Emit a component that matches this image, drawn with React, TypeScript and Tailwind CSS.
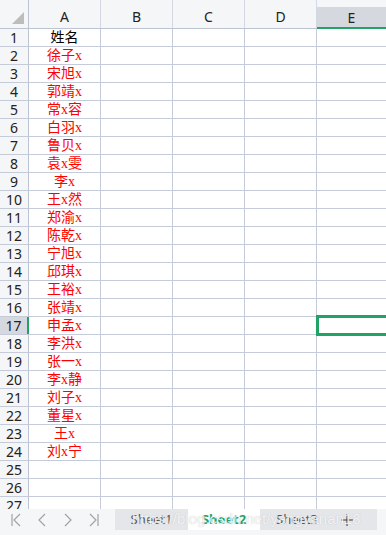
import React from 'react';

const names: { text: string; head?: boolean }[] = [
  { text: '姓名', head: true },
  { text: '徐子x' },
  { text: '宋旭x' },
  { text: '郭靖x' },
  { text: '常x容' },
  { text: '白羽x' },
  { text: '鲁贝x' },
  { text: '袁x雯' },
  { text: '李x' },
  { text: '王x然' },
  { text: '郑渝x' },
  { text: '陈乾x' },
  { text: '宁旭x' },
  { text: '邱琪x' },
  { text: '王裕x' },
  { text: '张靖x' },
  { text: '申孟x' },
  { text: '李洪x' },
  { text: '张一x' },
  { text: '李x静' },
  { text: '刘子x' },
  { text: '董星x' },
  { text: '王x' },
  { text: '刘x宁' },
  { text: '' },
  { text: '' },
  { text: '' },
];

const cols = ['A', 'B', 'C', 'D', 'E'];

const cellFont = { fontFamily: '"Liberation Serif", "Noto Sans CJK SC", serif' };
const uiFont = { fontFamily: '"Noto Sans", "Open Sans", sans-serif' };

const NavIcon = ({ kind }: { kind: 'first' | 'prev' | 'next' | 'last' }) => (
  <svg width="12" height="14" viewBox="0 0 12 14" fill="none" stroke="#a3a3a3" strokeWidth="1.2">
    {kind === 'first' && (
      <>
        <path d="M2 1v12" />
        <path d="M10 1L4 7l6 6" />
      </>
    )}
    {kind === 'prev' && <path d="M9 1L3 7l6 6" />}
    {kind === 'next' && <path d="M3 1l6 6-6 6" />}
    {kind === 'last' && (
      <>
        <path d="M2 1l6 6-6 6" />
        <path d="M10 1v12" />
      </>
    )}
  </svg>
);

export default function App() {
  return (
    <div className="w-[386px] h-[535px] overflow-hidden flex flex-col bg-white relative">
      {/* column headers */}
      <div className="flex h-[29px] shrink-0 bg-[#f5f6f8] border-b border-[#bcc3d3]">
        <div className="w-[29px] shrink-0 border-r border-[#bcc3d3] relative">
          <svg className="absolute left-[12px] top-[12px]" width="12" height="12" viewBox="0 0 12 12">
            <path d="M12 0V12H0Z" fill="#bdbdbd" />
          </svg>
        </div>
        {cols.map((c) => (
          <div
            key={c}
            className={
              c === 'E'
                ? 'flex-1 flex flex-col justify-end'
                : 'w-[72px] shrink-0 border-r border-[#d3d8e3] flex items-center justify-center pt-[4px]'
            }
          >
            {c === 'E' ? (
              <div className="h-[22px] bg-[#d5d8df] border-b-2 border-[#21a366] flex items-center justify-center -mb-[1px]">
                <span className="text-[14px] text-[#222]" style={uiFont}>
                  {c}
                </span>
              </div>
            ) : (
              <span className="text-[14px] text-[#222]" style={uiFont}>
                {c}
              </span>
            )}
          </div>
        ))}
      </div>

      {/* rows */}
      <div className="flex-1 overflow-hidden">
        {names.map((n, i) => {
          const row = i + 1;
          const active = row === 17;
          return (
            <div key={row} className="flex h-[18px] border-b border-[#c5cbd9]">
              <div
                className={
                  active
                    ? 'w-[29px] shrink-0 bg-[#d5d8df] border-r-2 border-[#21a366] flex items-center justify-center'
                    : 'w-[29px] shrink-0 bg-[#f5f6f8] border-r border-[#bcc3d3] flex items-center justify-center'
                }
              >
                <span className="text-[14px] leading-none text-[#222]" style={uiFont}>
                  {row}
                </span>
              </div>
              <div className="w-[72px] shrink-0 border-r border-[#c5cbd9] flex items-center justify-center">
                <span
                  className={n.head ? 'text-[14px] leading-none text-black' : 'text-[14px] leading-none text-[#ff0000]'}
                  style={cellFont}
                >
                  {n.text}
                </span>
              </div>
              <div className="w-[72px] shrink-0 border-r border-[#c5cbd9]" />
              <div className="w-[72px] shrink-0 border-r border-[#c5cbd9]" />
              <div className="w-[72px] shrink-0 border-r border-[#c5cbd9]" />
              <div className="flex-1 relative">
                {active && (
                  <div className="absolute -top-[2px] -left-[1px] -right-[4px] -bottom-[2px] border-[3px] border-[#21a366]" />
                )}
              </div>
            </div>
          );
        })}
      </div>

      {/* sheet tab bar */}
      <div className="h-[26px] shrink-0 bg-[#f5f6f8] flex items-start" style={uiFont}>
        <div className="w-[115px] h-[21px] flex items-center pl-[10px] gap-[14px]">
          <NavIcon kind="first" />
          <NavIcon kind="prev" />
          <NavIcon kind="next" />
          <NavIcon kind="last" />
        </div>
        <div className="w-[262px] h-[21px] bg-[#e4e6ea] flex items-center">
          <div className="w-[73px] h-full flex items-center justify-center text-[13px] text-[#555]">Sheet1</div>
          <div className="w-[72px] h-full bg-white flex items-center justify-center text-[13px] font-bold text-[#21a366]">
            Sheet2
          </div>
          <div className="w-[74px] h-full flex items-center justify-center text-[13px] text-[#555]">Sheet3</div>
          <div className="w-[26px] h-full flex items-center justify-center">
            <svg width="14" height="14" viewBox="0 0 14 14" stroke="#333" strokeWidth="1">
              <path d="M7 1v12M1 7h12" />
            </svg>
          </div>
        </div>
      </div>

      {/* watermark */}
      <div
        className="absolute left-[132px] top-[508px] text-[15px] text-white/80 pointer-events-none whitespace-nowrap"
        style={{ fontFamily: '"Liberation Sans", sans-serif', textShadow: '0 0 1px rgba(140,140,140,0.5)' }}
      >
        https://blog.csdn.net/yangyanan18
      </div>
    </div>
  );
}
